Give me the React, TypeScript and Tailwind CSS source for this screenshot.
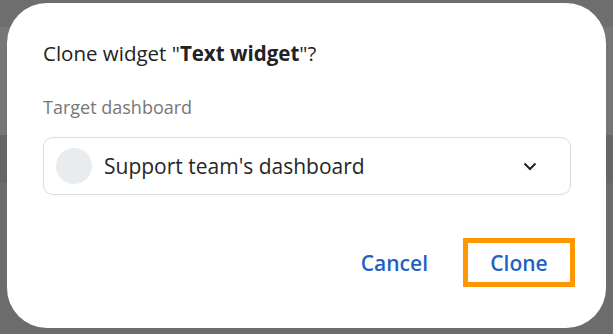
import React from "react";

export default function App() {
  return (
    <div
      className="w-[613px] h-[334px] overflow-hidden pt-[3px] pl-[7px] bg-[linear-gradient(to_bottom,#6e6e6e_0px,#6e6e6e_27px,#767676_27px,#767676_135px,#646667_135px,#646667_183px,#6c6c6c_183px)]"
      style={{ fontFamily: '"Open Sans", sans-serif' }}
    >
      <div className="w-[599px] h-[325px] bg-white rounded-[40px] flex flex-col pl-[36px] pr-[31px] pt-[36px]">
        <h1 className="text-[20.5px] leading-[28px] text-[#222222]">
          Clone widget "<span className="font-bold">Text widget</span>"?
        </h1>
        <div className="mt-[28px] text-[18px] leading-[25px] text-[#777777]">Target dashboard</div>
        <div className="mt-[17px] mr-[4px] h-[58px] rounded-[10px] border border-[#d5dbe0] flex items-center pl-[12px] pr-[33px]">
          <div className="w-[36px] h-[36px] rounded-full bg-[#e9ecef]" />
          <div className="ml-[12px] text-[21px] leading-[28px] text-[#262626] flex-1">Support team's dashboard</div>
          <svg width="14" height="9" viewBox="0 0 14 9" fill="none">
            <polyline points="1.5,1.5 7,7 12.5,1.5" stroke="#222" strokeWidth="2" />
          </svg>
        </div>
        <div className="mt-[43px] flex items-center justify-end">
          <button className="text-[21px] leading-[28px] font-semibold text-[#1f62c4] mr-[35px]">Cancel</button>
          <button className="w-[112px] h-[49px] border-[5px] border-[#ff9800] text-[21px] leading-[28px] font-semibold text-[#1f62c4] flex items-center justify-center">
            Clone
          </button>
        </div>
      </div>
    </div>
  );
}
